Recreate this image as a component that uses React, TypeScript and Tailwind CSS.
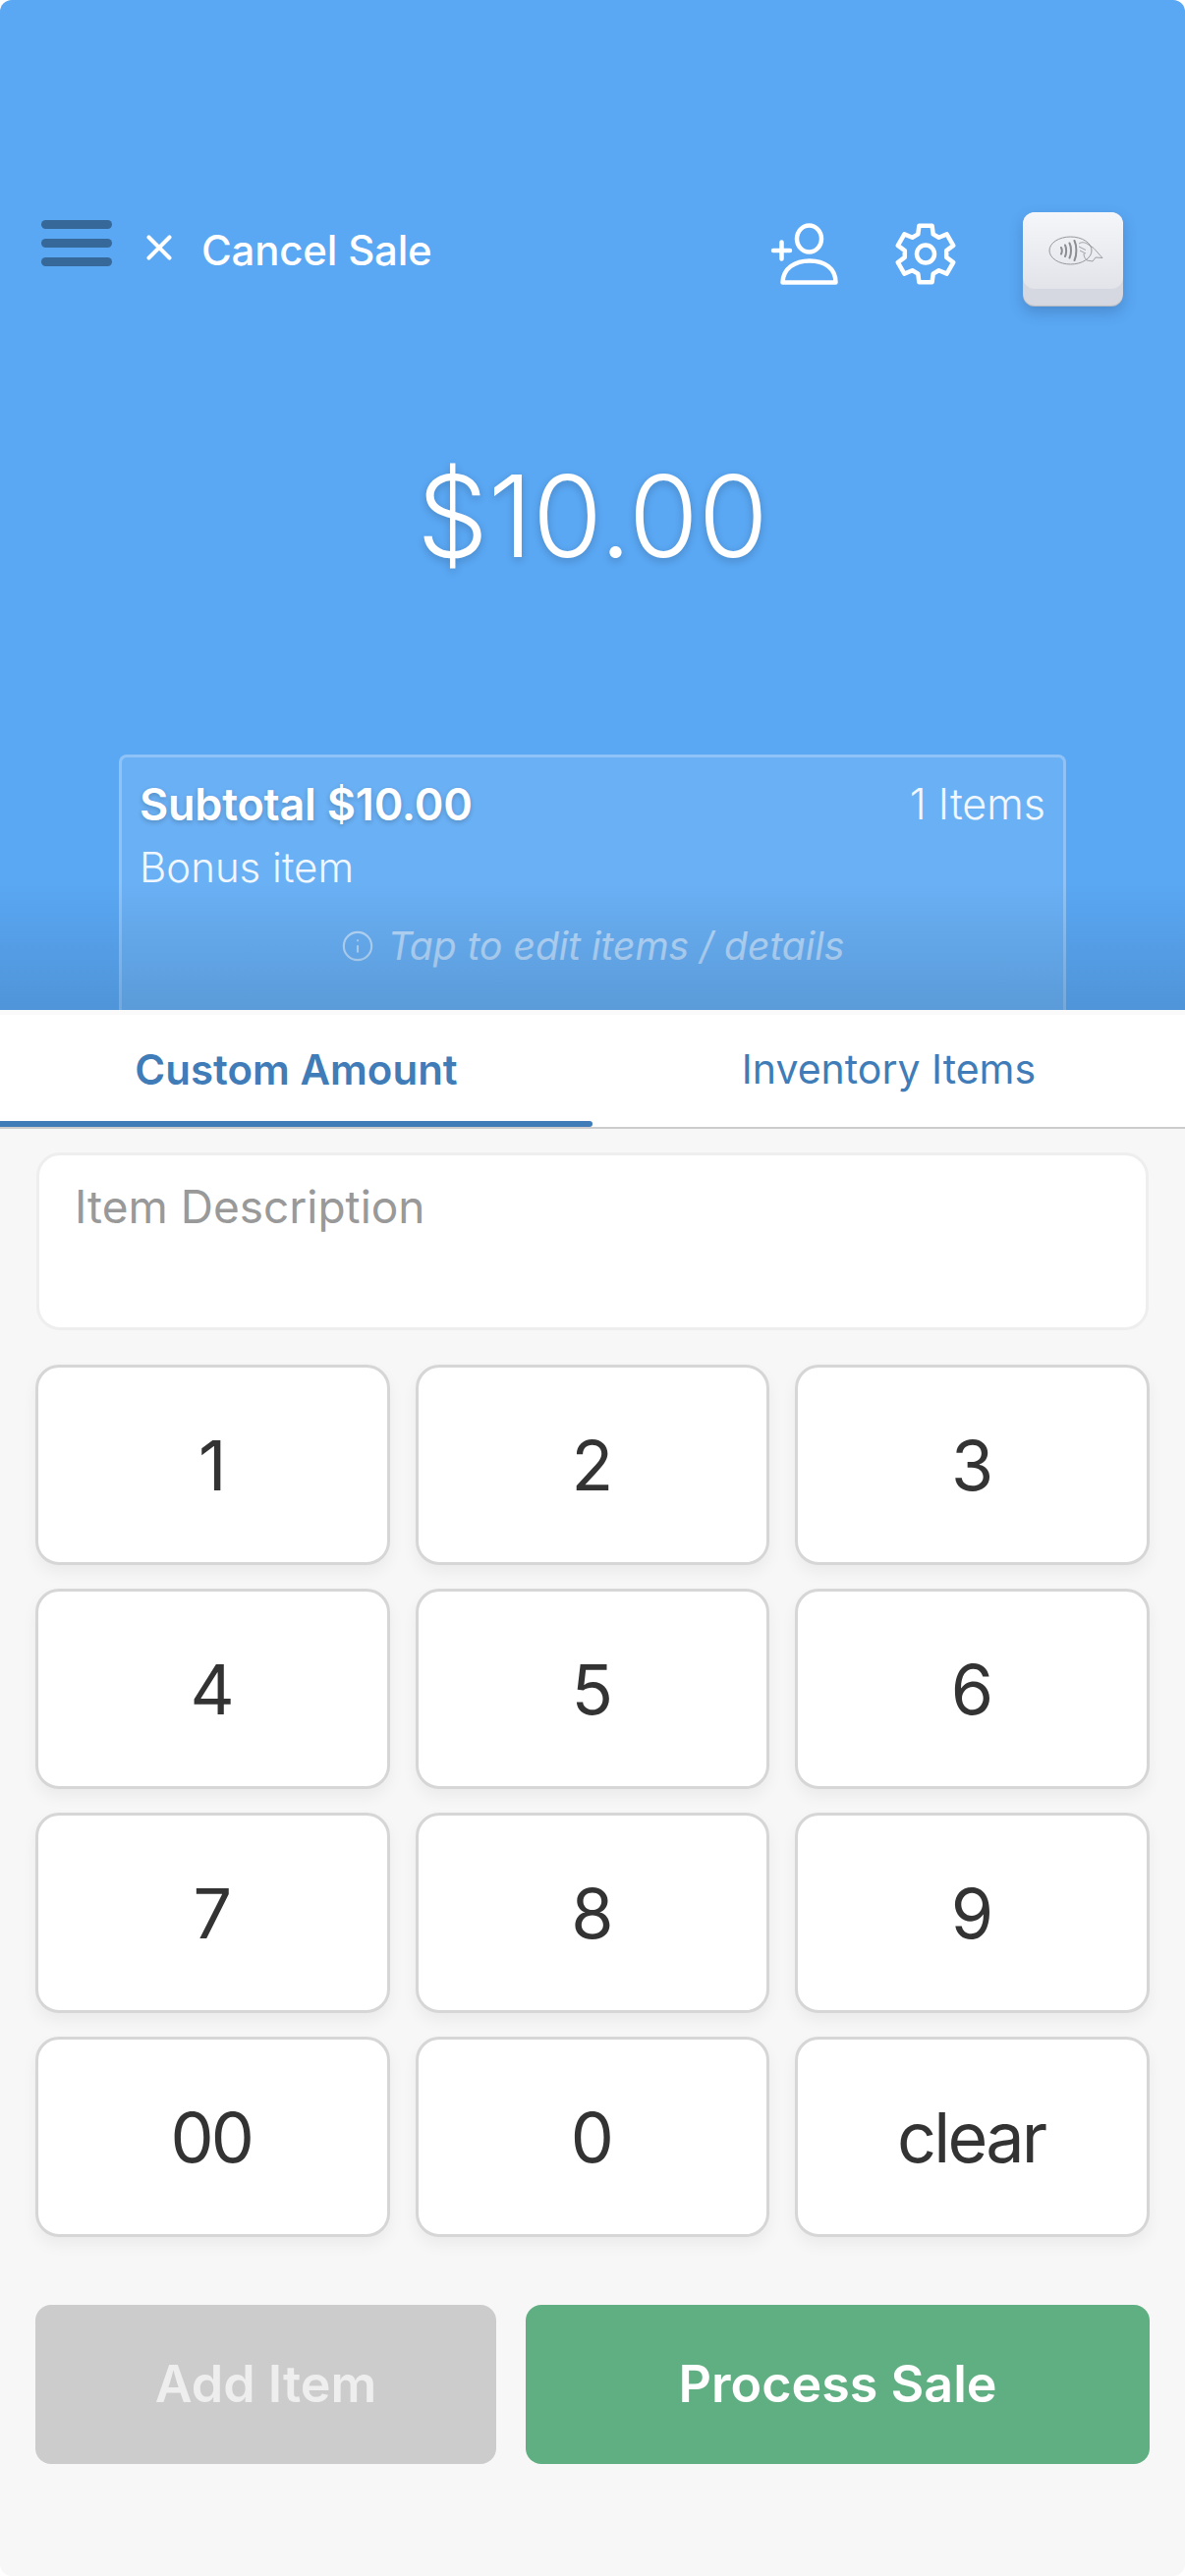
import { Info, X } from "lucide-react";

const keys = ["1", "2", "3", "4", "5", "6", "7", "8", "9", "00", "0", "clear"];

// six chunky teeth, straight valleys between them
const gearPath = () => {
  let d = "";
  for (let k = 0; k < 6; k++) {
    const a = k * 60 - 90;
    const pts: [number, number][] = [
      [21.5, a - 21],
      [29.5, a - 13],
      [29.5, a + 13],
      [21.5, a + 21],
    ];
    for (const [r, deg] of pts) {
      const rad = (deg * Math.PI) / 180;
      d += `${d ? "L" : "M"}${(32 + r * Math.cos(rad)).toFixed(1)} ${(32.5 + r * Math.sin(rad)).toFixed(1)}`;
    }
  }
  return d + "Z";
};

const AddCustomerIcon = () => (
  <svg viewBox="0 0 72 66" className="w-[72px] h-[66px]" fill="none" stroke="white" strokeWidth="4.5" strokeLinecap="round" strokeLinejoin="round">
    <path d="M4 29h17M12.500 20.500v17" />
    <ellipse cx="40.500" cy="17" rx="12.500" ry="13.500" />
    <path d="M13.500 61.500C14 47 26 39.500 41 39.500S67.500 47 67.500 61.500z" />
  </svg>
);

const GearIcon = () => (
  <svg viewBox="0 0 64 66" className="w-[64px] h-[66px]" fill="none" stroke="white" strokeWidth="4.5" strokeLinejoin="round">
    <path d={gearPath()} />
    <circle cx="32" cy="32.500" r="9" />
  </svg>
);

const ContactlessIcon = () => (
  <svg viewBox="0 0 56 32" className="w-[56px] h-[32px]" fill="none" stroke="#8b8d92">
    <ellipse cx="22.500" cy="16" rx="21.500" ry="14" strokeWidth="0.9" />
    <path d="M13 13c1 2 1 4.500 0 6.500M17 10.500c1.500 3 1.500 8.500 0 11.500M21.500 8.500c2 4 2 11 0 15M26.500 6c2.500 5 2.500 15 0 20" strokeWidth="2" strokeLinecap="round" />
    <path d="M31 9c3-2 6-1.500 9 .5l6 4 9 10-7-.500-3 4-6-1c-2-2-3-4-3-7M31 12l7 3.500M32 16l6 3" strokeWidth="0.8" strokeLinejoin="round" />
  </svg>
);

const CardReader = () => (
  <div className="w-[102px] h-[96px] ml-[67px] rounded-[12px] bg-[#d5d8e0] shadow-[inset_0_-1px_1px_rgba(0,0,0,0.15),0_6px_14px_rgba(40,80,130,0.3)]">
    <div className="h-[78px] pl-[6px] rounded-[12px] bg-gradient-to-b from-[#f5f6f9] to-[#e3e4ea] flex items-center justify-center">
      <ContactlessIcon />
    </div>
  </div>
);

const Header = () => (
  <div className="flex items-start pl-[42px] pr-[63px]">
    <div className="flex flex-col gap-[10px] w-[72px] mt-[8px]">
      <div className="h-[9px] rounded-full bg-[#36699a]"></div>
      <div className="h-[9px] rounded-full bg-[#36699a]"></div>
      <div className="h-[9px] rounded-full bg-[#36699a]"></div>
    </div>
    <X className="ml-[27px] mt-[15px] text-white" size={42} strokeWidth={2.3} />
    <span className="ml-[22px] mt-[15px] text-[42px] leading-[48px] font-medium tracking-[-0.005em] text-white">Cancel Sale</span>
    <div className="flex-1"></div>
    <div className="mt-[10px]">
      <AddCustomerIcon />
    </div>
    <div className="ml-[55px] mt-[10px]">
      <GearIcon />
    </div>
    <CardReader />
  </div>
);

const Hero = () => (
  <div className="relative h-[1028px] shrink-0 overflow-hidden bg-[#5aa7f3] pt-[216px]">
    <Header />
    <div className="mt-[146px] text-center text-[115px] leading-[136px] font-light text-white [text-shadow:0_3px_8px_rgba(0,0,0,0.18)]">
      $10.00
    </div>
    <div className="mx-[121px] mt-[174px] h-[320px] rounded-[8px] border-[3px] border-white/25 bg-white/10 px-[18px] pt-[16px]">
      <div className="flex items-center justify-between">
        <span className="text-[45px] leading-[64px] font-semibold tracking-[-0.005em] text-white [text-shadow:0_2px_5px_rgba(0,0,0,0.2)]">Subtotal $10.00</span>
        <span className="-mt-[2px] text-[43px] leading-[64px] font-light text-white/90">1 Items</span>
      </div>
      <div className="text-[42px] leading-[64px] font-light text-white/90">Bonus item</div>
      <div className="mt-[24px] flex items-center justify-center gap-[14px] text-[39px] leading-[48px] italic text-white/55">
        <Info size={34} strokeWidth={1.5} />
        <span>Tap to edit items / details</span>
      </div>
    </div>
    {/* Fade over the bottom of the hero */}
    <div className="absolute inset-x-0 bottom-0 h-[130px] bg-gradient-to-b from-transparent to-[#36699a]/30"></div>
  </div>
);

const Tabs = () => (
  <div className="flex h-[121px] shrink-0 bg-white border-t-[5px] border-t-[#fafafa] border-b-2 border-b-[#cccccc] text-[#3f7cb8] text-[41px]">
    <div className="relative flex-1 flex items-center justify-center pb-[4px] text-[42px] font-semibold">
      Custom Amount
      <div className="absolute left-0 right-0 bottom-0 h-[6px] rounded-r-full bg-[#3f7cb8]"></div>
    </div>
    <div className="flex-1 flex items-center justify-center pb-[2px]">Inventory Items</div>
  </div>
);

export default function App() {
  return (
    <div className="w-[1206px] h-[2622px] flex flex-col overflow-hidden rounded-[12px] bg-[#f7f7f7] font-['Inter',sans-serif]">
      <Hero />
      <Tabs />
      <div className="flex-1 px-[36px] pt-[24px]">
        <div className="mx-[1px] h-[181px] rounded-[24px] border-[3px] border-[#eeeeee] bg-white px-[36px] pt-[22px] text-[46px] leading-[60px] text-[#999999]">
          Item Description
        </div>
        <div className="mt-[35px] grid grid-cols-3 gap-x-[26px] gap-y-[24px]">
          {keys.map((key) => (
            <div
              key={key}
              className="h-[204px] pr-[3px] flex items-center justify-center rounded-[24px] border-[3px] border-[#d6d6d6] bg-white text-[70px] tracking-[-0.04em] text-[#333333] shadow-[0_8px_16px_rgba(0,0,0,0.05)]"
            >
              {key}
            </div>
          ))}
        </div>
        <div className="mt-[69px] flex gap-[30px]">
          <div className="w-[469px] h-[162px] flex items-center justify-center rounded-[16px] bg-[#cccccc] text-[52px] font-semibold text-[#eeeeee]">Add Item</div>
          <div className="flex-1 h-[162px] flex items-center justify-center rounded-[16px] bg-[#60af82] text-[52px] font-semibold text-white">Process Sale</div>
        </div>
      </div>
    </div>
  );
}
